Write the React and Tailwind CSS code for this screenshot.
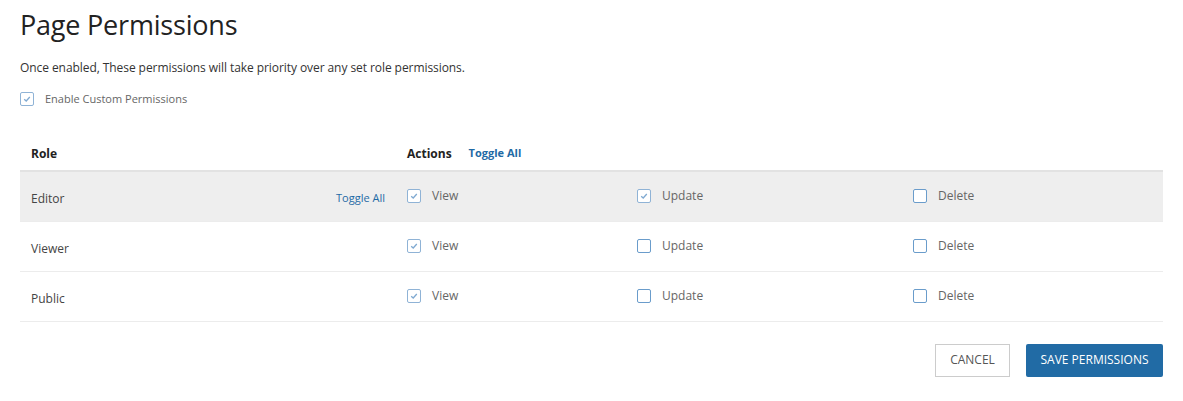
const roles = [
    {name: "Editor", view: true, update: true, del: false, highlight: true},
    {name: "Viewer", view: true, update: false, del: false},
    {name: "Public", view: true, update: false, del: false},
];

function Box({checked}) {
    return (
        <span className={`flex h-[14px] w-[14px] shrink-0 items-center justify-center rounded-[2px] border ${checked ? "border-[#8fb3d6]" : "border-[#6a9ccb]"} bg-white`}>
            {checked && (
                <svg viewBox="0 0 10 10" className="h-[8px] w-[8px]">
                    <path d="M1.5 5.2 L4 7.5 L8.5 2.5" fill="none" stroke="#7fa9d1" strokeWidth="1.6"/>
                </svg>
            )}
        </span>
    );
}

function Check({checked, label, className = "", textClass = "text-[12px]"}) {
    return (
        <label className={`flex items-center gap-[11px] ${className}`}>
            <Box checked={checked}/>
            <span className={`${textClass} text-[#666]`}>{label}</span>
        </label>
    );
}

export default function App() {
    return (
        <div className="min-h-[401px] bg-white px-5 pt-[7px] font-['Open_Sans',sans-serif] text-[#333]">
            <h1 className="text-[27px] leading-[36px] font-normal text-[#222] tracking-[-0.2px]">Page Permissions</h1>
            <p className="mt-[16px] text-[12px] leading-[18px] text-[#333] tracking-[-0.07px]">
                Once enabled, These permissions will take priority over any set role permissions.
            </p>
            <div className="mt-[14px]">
                <Check checked label="Enable Custom Permissions" textClass="text-[11px]"/>
            </div>

            <div className="mt-[25px]">
                <div className="flex h-[39px] items-center border-b-2 border-[#e2e2e2] pt-[5px]">
                    <div className="w-[387px] pl-[11px] text-[12px] font-bold text-[#222]">Role</div>
                    <div className="flex items-center gap-[17px]">
                        <span className="text-[12px] font-bold text-[#222]">Actions</span>
                        <button className="text-[11px] font-bold text-[#1f6aa5]">Toggle All</button>
                    </div>
                </div>
                {roles.map((role) => (
                    <div key={role.name} className={`flex h-[50px] items-center border-b border-[#ececec] ${role.highlight ? "bg-[#eeeeee]" : ""}`}>
                        <div className="flex w-[387px] items-center justify-between pl-[11px] pr-[22px] pt-[5px]">
                            <span className="text-[12px] text-[#444]">{role.name}</span>
                            {role.highlight && <button className="text-[11px] text-[#1f6aa5]">Toggle All</button>}
                        </div>
                        <Check checked={role.view} label="View" className="w-[230px] -mt-[1px]"/>
                        <Check checked={role.update} label="Update" className="w-[276px] -mt-[1px]"/>
                        <Check checked={role.del} label="Delete" className="-mt-[1px]"/>
                    </div>
                ))}
            </div>

            <div className="mt-[22px] flex justify-end gap-4">
                <button className="h-[33px] w-[75px] border border-[#cccccc] bg-white text-[12px] text-[#555]">CANCEL</button>
                <button className="h-[33px] w-[137px] rounded-[2px] bg-[#216ba5] text-[12px] text-white">SAVE PERMISSIONS</button>
            </div>
        </div>
    );
}
